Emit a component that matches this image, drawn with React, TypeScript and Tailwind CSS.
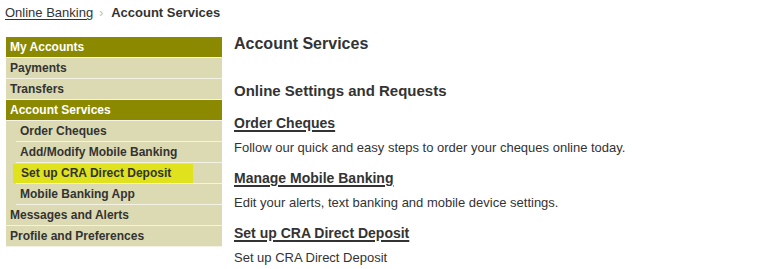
const font = { fontFamily: '"Liberation Sans", Arial, sans-serif' };

type NavItem = {
  label: string;
  kind: "header" | "top" | "sub";
  highlight?: boolean;
};

const navItems: NavItem[] = [
  { label: "My Accounts", kind: "header" },
  { label: "Payments", kind: "top" },
  { label: "Transfers", kind: "top" },
  { label: "Account Services", kind: "header" },
  { label: "Order Cheques", kind: "sub" },
  { label: "Add/Modify Mobile Banking", kind: "sub" },
  { label: "Set up CRA Direct Deposit", kind: "sub", highlight: true },
  { label: "Mobile Banking App", kind: "sub" },
  { label: "Messages and Alerts", kind: "top" },
  { label: "Profile and Preferences", kind: "top" },
];

const sections = [
  {
    title: "Order Cheques",
    text: "Follow our quick and easy steps to order your cheques online today.",
  },
  {
    title: "Manage Mobile Banking",
    text: "Edit your alerts, text banking and mobile device settings.",
  },
  {
    title: "Set up CRA Direct Deposit",
    text: "Set up CRA Direct Deposit",
  },
];

const SideNav = () => (
  <div className="w-[216px] mt-[3px] flex flex-col text-[12px] font-bold">
    {navItems.map((item) => {
      if (item.kind === "header") {
        return (
          <div
            key={item.label}
            className="h-[21px] bg-[#8a8900] border-b border-[#f3f2e4] pl-[4px] leading-[20px] text-white"
          >
            {item.label}
          </div>
        );
      }
      if (item.kind === "top") {
        return (
          <div
            key={item.label}
            className="h-[21px] bg-[#dcdab2] border-b border-[#f3f2e4] pl-[4px] leading-[20px] text-[#333]"
          >
            {item.label}
          </div>
        );
      }
      return (
        <div key={item.label} className="h-[21px] bg-[#dcdab2]">
          <div className="ml-[10px] h-[21px] border-b border-[#f3f2e4] pl-[4px] leading-[20px] text-[#333]">
            {item.highlight ? (
              <span className="inline-block h-[19px] w-[180px] -ml-[7px] pl-[8px] bg-[#dfe21c] leading-[19px]">
                {item.label}
              </span>
            ) : (
              item.label
            )}
          </div>
        </div>
      );
    })}
  </div>
);

export default function App() {
  return (
    <div className="w-[768px] h-[269px] bg-white overflow-hidden text-[#333]" style={font}>
      <div className="pt-[4px] pl-[5px] h-[34px] flex items-start text-[13px] leading-[18px]">
        <span className="underline underline-offset-2">Online Banking</span>
        <span className="ml-[6px] mr-[8px] text-[#bbb] text-[12px]">›</span>
        <span className="font-bold">Account Services</span>
      </div>

      <div className="flex gap-[12px] pl-[6px]">
        <SideNav />

        <div className="flex flex-col">
          <h1 className="text-[16px] leading-[20px] font-bold">Account Services</h1>
          <h2 className="mt-[27px] text-[15px] leading-[20px] font-bold">
            Online Settings and Requests
          </h2>
          {sections.map((s, i) => (
            <div key={s.title} className={i === 0 ? "mt-[12px]" : "mt-[10px]"}>
              <div className="text-[14px] leading-[20px] font-bold underline underline-offset-2 decoration-[1.5px]">
                {s.title}
              </div>
              <div className="mt-[5px] text-[13px] leading-[20px]">{s.text}</div>
            </div>
          ))}
        </div>
      </div>
    </div>
  );
}
